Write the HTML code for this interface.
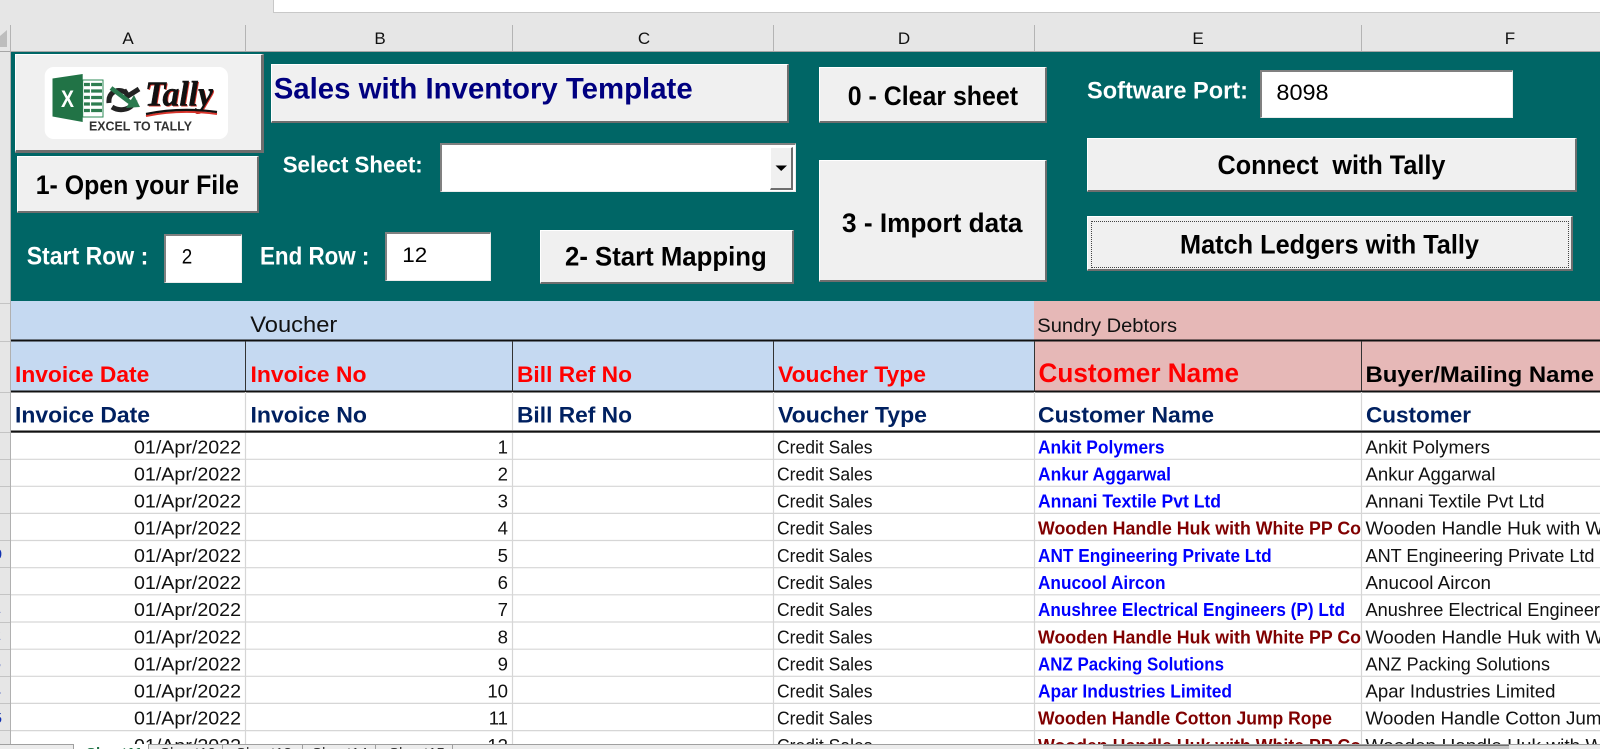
<!DOCTYPE html>
<html><head><meta charset="utf-8"><title>Excel to Tally</title>
<style>
html,body{margin:0;padding:0;width:1600px;height:749px;overflow:hidden;background:#e6e6e6}
svg{position:absolute;left:0;top:0}
.b,.i{position:absolute;box-sizing:border-box}
.b{background:#f0f0f0;border-style:solid;border-color:#fff #6e6e6e #6e6e6e #fff;border-width:1.5px 2px 2px 1.5px}
.i{background:#fff;border-style:solid;border-color:#808080 #ececec #ececec #808080;border-width:2px 1.5px 1.5px 2px}
text{font-family:"Liberation Sans",sans-serif;white-space:pre}
.r{font-size:18.6px;fill:#111}
.u{font-size:18.6px;font-weight:700;fill:#0000ff}
.m{font-size:18.6px;font-weight:700;fill:#800000}
.h{font-size:22.5px;font-weight:700}
.t{font-size:27px;font-weight:700;fill:#000}
.w{font-weight:700;fill:#fff}
.c{font-size:17px;fill:#111;text-anchor:middle}
</style></head><body>
<svg width="1600" height="749" viewBox="0 0 1600 749">
<defs>
<clipPath id="e"><rect x="1034" y="430" width="327" height="320"/></clipPath>
</defs>
<rect width="1600" height="749" fill="#e6e6e6"/>
<rect x="273.5" y="-2" width="1330" height="14.5" fill="#fff" stroke="#c8c8c8"/>
<path d="M7 30V47H0V36z" fill="#bdbdbd"/>
<g stroke="#b4b4b4" stroke-width="1">
<path d="M10.5 25V51M245.5 25V51M512.5 25V51M773.5 25V51M1034.5 25V51M1361.5 25V51"/>
</g>
<rect x="0" y="51" width="1600" height="1" fill="#a6a6a6"/>
<text class="c" x="128" y="44">A</text><text class="c" x="380" y="44">B</text><text class="c" x="644" y="44">C</text><text class="c" x="904" y="44">D</text><text class="c" x="1198" y="44">E</text><text class="c" x="1510" y="44">F</text>
<!-- row header -->
<rect x="10" y="51" width="1" height="698" fill="#b0b0b0"/>
<g stroke="#c4c4c4" stroke-width="1"><path d="M0 303.5H10M0 341.5H10M0 392.5H10M0 432.5H10M0 459.5H10M0 486.5H10M0 513.5H10M0 540.5H10M0 567.5H10M0 594.5H10M0 622.5H10M0 649.5H10M0 676.5H10M0 703.5H10M0 730.5H10"/></g>
<g font-size="15" fill="#1030b0" text-anchor="end"><text x="2" y="559">0</text><text x="1" y="613">1</text><text x="1" y="640">2</text><text x="1" y="668">3</text><text x="1" y="696">4</text><text x="2" y="723">5</text><text x="1" y="749">6</text></g>
<!-- sheet bg -->
<rect x="11" y="52" width="1589" height="249" fill="#006666"/>
<rect x="11" y="301" width="1023" height="90" fill="#c5d9f1"/>
<rect x="1034" y="301" width="566" height="90" fill="#e6b8b7"/>
<rect x="11" y="392" width="1589" height="357" fill="#fff"/>
<rect x="11" y="339.5" width="1589" height="2" fill="#111"/>
<rect x="11" y="390.5" width="1589" height="2" fill="#111"/>
<rect x="11" y="430.5" width="1589" height="2.2" fill="#111"/>
<g stroke="#333" stroke-width="1"><path d="M245.5 341V391M512.5 341V391M773.5 341V391M1034.5 341V391M1361.5 341V391"/></g>
<g stroke="#d6d6d6" stroke-width="1.2"><path d="M245.5 392V430M512.5 392V430M773.5 392V430M1034.5 392V430M1361.5 392V430M245.5 433V749M512.5 433V749M773.5 433V749M1034.5 433V749M1361.5 433V749"/>
<path d="M11 459.3H1600M11 486.3H1600M11 513.4H1600M11 540.5H1600M11 567.7H1600M11 594.8H1600M11 622H1600M11 649.2H1600M11 676.3H1600M11 703.4H1600M11 730.6H1600"/></g>
<!-- headers -->
<text x="250.3" y="332" font-size="22.5" textLength="87" lengthAdjust="spacingAndGlyphs" fill="#111">Voucher</text>
<text x="1037.3" y="332" font-size="19.5" textLength="139.7" lengthAdjust="spacingAndGlyphs" fill="#111">Sundry Debtors</text>
<g fill="#ff0000">
<text class="h" x="15" y="382" textLength="134.3" lengthAdjust="spacingAndGlyphs">Invoice Date</text>
<text class="h" x="250.5" y="382" textLength="116" lengthAdjust="spacingAndGlyphs">Invoice No</text>
<text class="h" x="517" y="382" textLength="115" lengthAdjust="spacingAndGlyphs">Bill Ref No</text>
<text class="h" x="778" y="382" textLength="148" lengthAdjust="spacingAndGlyphs">Voucher Type</text>
<text class="h" x="1038.5" y="382" style="font-size:26.5px" textLength="200.5" lengthAdjust="spacingAndGlyphs">Customer Name</text>
</g>
<text class="h" x="1365.5" y="382" textLength="228.5" lengthAdjust="spacingAndGlyphs" fill="#000">Buyer/Mailing Name</text>
<g fill="#002060">
<text class="h" x="15" y="422.3" textLength="135" lengthAdjust="spacingAndGlyphs">Invoice Date</text>
<text class="h" x="250.5" y="422.3" textLength="116.5" lengthAdjust="spacingAndGlyphs">Invoice No</text>
<text class="h" x="517" y="422.3" textLength="115" lengthAdjust="spacingAndGlyphs">Bill Ref No</text>
<text class="h" x="778" y="422.3" textLength="149" lengthAdjust="spacingAndGlyphs">Voucher Type</text>
<text class="h" x="1038" y="422.3" textLength="176" lengthAdjust="spacingAndGlyphs">Customer Name</text>
<text class="h" x="1366" y="422.3" textLength="105" lengthAdjust="spacingAndGlyphs">Customer</text>
</g>
<!-- dates -->
<g class="r">
<text class="r" x="134" y="453.3" textLength="107" lengthAdjust="spacingAndGlyphs">01/Apr/2022</text>
<text class="r" x="134" y="480.4" textLength="107" lengthAdjust="spacingAndGlyphs">01/Apr/2022</text>
<text class="r" x="134" y="507.6" textLength="107" lengthAdjust="spacingAndGlyphs">01/Apr/2022</text>
<text class="r" x="134" y="534.7" textLength="107" lengthAdjust="spacingAndGlyphs">01/Apr/2022</text>
<text class="r" x="134" y="561.9" textLength="107" lengthAdjust="spacingAndGlyphs">01/Apr/2022</text>
<text class="r" x="134" y="589" textLength="107" lengthAdjust="spacingAndGlyphs">01/Apr/2022</text>
<text class="r" x="134" y="616.1" textLength="107" lengthAdjust="spacingAndGlyphs">01/Apr/2022</text>
<text class="r" x="134" y="643.3" textLength="107" lengthAdjust="spacingAndGlyphs">01/Apr/2022</text>
<text class="r" x="134" y="670.4" textLength="107" lengthAdjust="spacingAndGlyphs">01/Apr/2022</text>
<text class="r" x="134" y="697.6" textLength="107" lengthAdjust="spacingAndGlyphs">01/Apr/2022</text>
<text class="r" x="134" y="724.7" textLength="107" lengthAdjust="spacingAndGlyphs">01/Apr/2022</text>
<text class="r" x="134" y="751.9" textLength="107" lengthAdjust="spacingAndGlyphs">01/Apr/2022</text>
</g>
<!-- numbers -->
<g text-anchor="end">
<text class="r" x="508" y="453.3">1</text>
<text class="r" x="508" y="480.4">2</text>
<text class="r" x="508" y="507.6">3</text>
<text class="r" x="508" y="534.7">4</text>
<text class="r" x="508" y="561.9">5</text>
<text class="r" x="508" y="589">6</text>
<text class="r" x="508" y="616.1">7</text>
<text class="r" x="508" y="643.3">8</text>
<text class="r" x="508" y="670.4">9</text>
<text class="r" x="508" y="697.6">10</text>
<text class="r" x="508" y="724.7">11</text>
<text class="r" x="508" y="751.9">12</text>
</g>
<!-- voucher type -->
<text class="r" x="777" y="453.3" textLength="95.5" lengthAdjust="spacingAndGlyphs">Credit Sales</text>
<text class="r" x="777" y="480.4" textLength="95.5" lengthAdjust="spacingAndGlyphs">Credit Sales</text>
<text class="r" x="777" y="507.6" textLength="95.5" lengthAdjust="spacingAndGlyphs">Credit Sales</text>
<text class="r" x="777" y="534.7" textLength="95.5" lengthAdjust="spacingAndGlyphs">Credit Sales</text>
<text class="r" x="777" y="561.9" textLength="95.5" lengthAdjust="spacingAndGlyphs">Credit Sales</text>
<text class="r" x="777" y="589" textLength="95.5" lengthAdjust="spacingAndGlyphs">Credit Sales</text>
<text class="r" x="777" y="616.1" textLength="95.5" lengthAdjust="spacingAndGlyphs">Credit Sales</text>
<text class="r" x="777" y="643.3" textLength="95.5" lengthAdjust="spacingAndGlyphs">Credit Sales</text>
<text class="r" x="777" y="670.4" textLength="95.5" lengthAdjust="spacingAndGlyphs">Credit Sales</text>
<text class="r" x="777" y="697.6" textLength="95.5" lengthAdjust="spacingAndGlyphs">Credit Sales</text>
<text class="r" x="777" y="724.7" textLength="95.5" lengthAdjust="spacingAndGlyphs">Credit Sales</text>
<text class="r" x="777" y="751.9" textLength="95.5" lengthAdjust="spacingAndGlyphs">Credit Sales</text>
<!-- customer -->
<g clip-path="url(#e)">
<text class="u" x="1038" y="453.3" textLength="126.6" lengthAdjust="spacingAndGlyphs">Ankit Polymers</text>
<text class="u" x="1038" y="480.4" textLength="133" lengthAdjust="spacingAndGlyphs">Ankur Aggarwal</text>
<text class="u" x="1038" y="507.6" textLength="183" lengthAdjust="spacingAndGlyphs">Annani Textile Pvt Ltd</text>
<text class="m" x="1038" y="534.7" textLength="323" lengthAdjust="spacingAndGlyphs">Wooden Handle Huk with White PP Co</text>
<text class="u" x="1038" y="561.9" textLength="233.6" lengthAdjust="spacingAndGlyphs">ANT Engineering Private Ltd</text>
<text class="u" x="1038" y="589" textLength="127.5" lengthAdjust="spacingAndGlyphs">Anucool Aircon</text>
<text class="u" x="1038" y="616.1" textLength="307" lengthAdjust="spacingAndGlyphs">Anushree Electrical Engineers (P) Ltd</text>
<text class="m" x="1038" y="643.3" textLength="323" lengthAdjust="spacingAndGlyphs">Wooden Handle Huk with White PP Co</text>
<text class="u" x="1038" y="670.4" textLength="186" lengthAdjust="spacingAndGlyphs">ANZ Packing Solutions</text>
<text class="u" x="1038" y="697.6" textLength="194" lengthAdjust="spacingAndGlyphs">Apar Industries Limited</text>
<text class="m" x="1038" y="724.7" textLength="294" lengthAdjust="spacingAndGlyphs">Wooden Handle Cotton Jump Rope</text>
<text class="m" x="1038" y="751.9" textLength="323" lengthAdjust="spacingAndGlyphs">Wooden Handle Huk with White PP Co</text>
</g>
<!-- buyer -->
<text class="r" x="1365.5" y="453.3" textLength="124.5" lengthAdjust="spacingAndGlyphs">Ankit Polymers</text>
<text class="r" x="1365.5" y="480.4" textLength="130" lengthAdjust="spacingAndGlyphs">Ankur Aggarwal</text>
<text class="r" x="1365.5" y="507.6" textLength="179" lengthAdjust="spacingAndGlyphs">Annani Textile Pvt Ltd</text>
<text class="r" x="1365.5" y="534.7" textLength="238" lengthAdjust="spacingAndGlyphs">Wooden Handle Huk with W</text>
<text class="r" x="1365.5" y="561.9" textLength="229" lengthAdjust="spacingAndGlyphs">ANT Engineering Private Ltd</text>
<text class="r" x="1365.5" y="589" textLength="125.5" lengthAdjust="spacingAndGlyphs">Anucool Aircon</text>
<text class="r" x="1365.5" y="616.1" textLength="234.5" lengthAdjust="spacingAndGlyphs">Anushree Electrical Engineer</text>
<text class="r" x="1365.5" y="643.3" textLength="238" lengthAdjust="spacingAndGlyphs">Wooden Handle Huk with W</text>
<text class="r" x="1365.5" y="670.4" textLength="184.5" lengthAdjust="spacingAndGlyphs">ANZ Packing Solutions</text>
<text class="r" x="1365.5" y="697.6" textLength="190" lengthAdjust="spacingAndGlyphs">Apar Industries Limited</text>
<text class="r" x="1365.5" y="724.7" textLength="236" lengthAdjust="spacingAndGlyphs">Wooden Handle Cotton Jum</text>
<text class="r" x="1365.5" y="751.9" textLength="238" lengthAdjust="spacingAndGlyphs">Wooden Handle Huk with W</text>
<!-- bottom tab bar -->
<rect x="0" y="744" width="1600" height="5" fill="#ececec"/>
<rect x="0" y="744" width="73" height="1" fill="#a0a0a0"/>
<rect x="148" y="744" width="1452" height="1" fill="#a0a0a0"/>
<rect x="73" y="744" width="75" height="5" fill="#fff"/>
<rect x="73" y="744" width="1" height="5" fill="#a0a0a0"/>
<rect x="148" y="744" width="1" height="5" fill="#a0a0a0"/>
<path d="M222.5 745V749M302.5 745V749M375.5 745V749M452.5 745V749" stroke="#a0a0a0"/>
<rect x="1103" y="745" width="406" height="4" fill="#c4c4c4"/>
<rect x="1103" y="745" width="406" height="1" fill="#707070"/>
<g font-size="15" fill="#333">
<text x="86" y="758" font-weight="700" fill="#217346">Sheet11</text>
<text x="160" y="758">Sheet12</text>
<text x="236" y="758">Sheet13</text>
<text x="312" y="758">Sheet14</text>
<text x="389" y="758">Sheet15</text>
</g>
</svg>

<div class="b" style="left:15px;top:53.5px;width:249px;height:99.5px;border-width:1.5px 3px 3px 1.5px"></div>
<div class="b" style="left:16.5px;top:156px;width:242.5px;height:57px"></div>
<div class="b" style="left:270.5px;top:64px;width:518.5px;height:59px"></div>
<div class="b" style="left:818.5px;top:67px;width:228.5px;height:55.5px"></div>
<div class="b" style="left:818.5px;top:160px;width:228.5px;height:121.5px"></div>
<div class="b" style="left:1086.5px;top:137.5px;width:490.5px;height:54px"></div>
<div class="b" style="left:1086.5px;top:215.5px;width:486.5px;height:55.5px"></div>
<div style="position:absolute;box-sizing:border-box;left:1091px;top:220.5px;width:478px;height:47px;border:1px dotted #444"></div>
<div class="b" style="left:539.5px;top:229.5px;width:254px;height:54px"></div>
<div class="i" style="left:1259.5px;top:70px;width:253px;height:47.5px"></div>
<div class="i" style="left:440px;top:142.5px;width:356px;height:49px"></div>
<div class="b" style="left:769.5px;top:146.5px;width:23.5px;height:43px"></div>
<div class="i" style="left:164px;top:234px;width:77.5px;height:48.5px"></div>
<div class="i" style="left:385px;top:232px;width:105.5px;height:48.5px"></div>

<svg width="1600" height="749" viewBox="0 0 1600 749">
<!-- logo -->
<rect x="44.7" y="67" width="183.3" height="72" rx="9" fill="#fff"/>
<path d="M82.7 80H103V117H82.7z" fill="#fff" stroke="#2e8b57" stroke-width="1"/>
<path d="M84 84.5H102M84 91H102M84 97.5H102M84 104H102M84 110.5H102" stroke="#2e7d50" stroke-width="3.2"/>
<path d="M90.5 81V116" stroke="#fff" stroke-width="1.2"/>
<path d="M52.5 78.5L82.7 74V122L52.5 116.5z" fill="#217346"/>
<text x="61" y="107" font-size="24" font-weight="700" fill="#fff" textLength="13" lengthAdjust="spacingAndGlyphs">X</text>
<path d="M109 103C108 93 116 88 125 92M139 89L128 96L124 90M112 107C120 112 132 110 135 100" fill="none" stroke="#222" stroke-width="5"/>
<path d="M111 88L131 103" stroke="#2a7a4f" stroke-width="4.5"/>
<path d="M126 108L140 107L134 95z" fill="#2a7a4f"/>
<text x="146" y="106.5" font-style="italic" font-weight="700" font-size="35" textLength="68" lengthAdjust="spacingAndGlyphs" fill="#d9342b" style="font-family:'Liberation Serif',serif">Tally</text>
<text x="145" y="105.5" font-style="italic" font-weight="700" font-size="35" textLength="68" lengthAdjust="spacingAndGlyphs" fill="#111" stroke="#111" stroke-width=".5" style="font-family:'Liberation Serif',serif">Tally</text>
<path d="M146 115C170 110 195 110 217 113" fill="none" stroke="#d9342b" stroke-width="2" transform="translate(0 1)"/>
<path d="M146 114C170 109 195 109 217 112" fill="none" stroke="#111" stroke-width="2.2"/>
<text x="89" y="130.3" font-size="12.5" font-weight="700" fill="#333" textLength="103" lengthAdjust="spacingAndGlyphs">EXCEL TO TALLY</text>
<!-- button labels -->
<text class="t" x="35.7" y="194" textLength="203.3" lengthAdjust="spacingAndGlyphs">1- Open your File</text>
<text x="273.7" y="98.3" font-size="30" font-weight="700" fill="#000080" textLength="419" lengthAdjust="spacingAndGlyphs">Sales with Inventory Template</text>
<text class="t" x="847.8" y="105" textLength="170.2" lengthAdjust="spacingAndGlyphs">0 - Clear sheet</text>
<text class="t" x="842" y="232" textLength="180.5" lengthAdjust="spacingAndGlyphs">3 - Import data</text>
<text class="t" x="565" y="265.7" textLength="201.7" lengthAdjust="spacingAndGlyphs">2- Start Mapping</text>
<text class="t" x="1217.5" y="174" textLength="227.9" lengthAdjust="spacingAndGlyphs">Connect  with Tally</text>
<text class="t" x="1180" y="253.3" textLength="299" lengthAdjust="spacingAndGlyphs">Match Ledgers with Tally</text>
<!-- labels -->
<text class="w" x="282.7" y="172.3" font-size="23" textLength="140" lengthAdjust="spacingAndGlyphs">Select Sheet:</text>
<text class="w" x="1087" y="98.3" font-size="24.5" textLength="161" lengthAdjust="spacingAndGlyphs">Software Port:</text>
<text class="w" x="26.7" y="264.7" font-size="25" textLength="121.6" lengthAdjust="spacingAndGlyphs">Start Row :</text>
<text class="w" x="260" y="264.7" font-size="25" textLength="109.3" lengthAdjust="spacingAndGlyphs">End Row :</text>
<!-- input values -->
<text x="1276.4" y="100" font-size="22.5" fill="#000" textLength="52.2" lengthAdjust="spacingAndGlyphs">8098</text>
<text x="181.7" y="263.3" font-size="21.5" fill="#000" textLength="10.5" lengthAdjust="spacingAndGlyphs">2</text>
<text x="402.3" y="262" font-size="21.5" fill="#000" textLength="25" lengthAdjust="spacingAndGlyphs">12</text>
<path d="M775.5 165.5H787L781.2 171z" fill="#000"/>
</svg>
</body></html>
